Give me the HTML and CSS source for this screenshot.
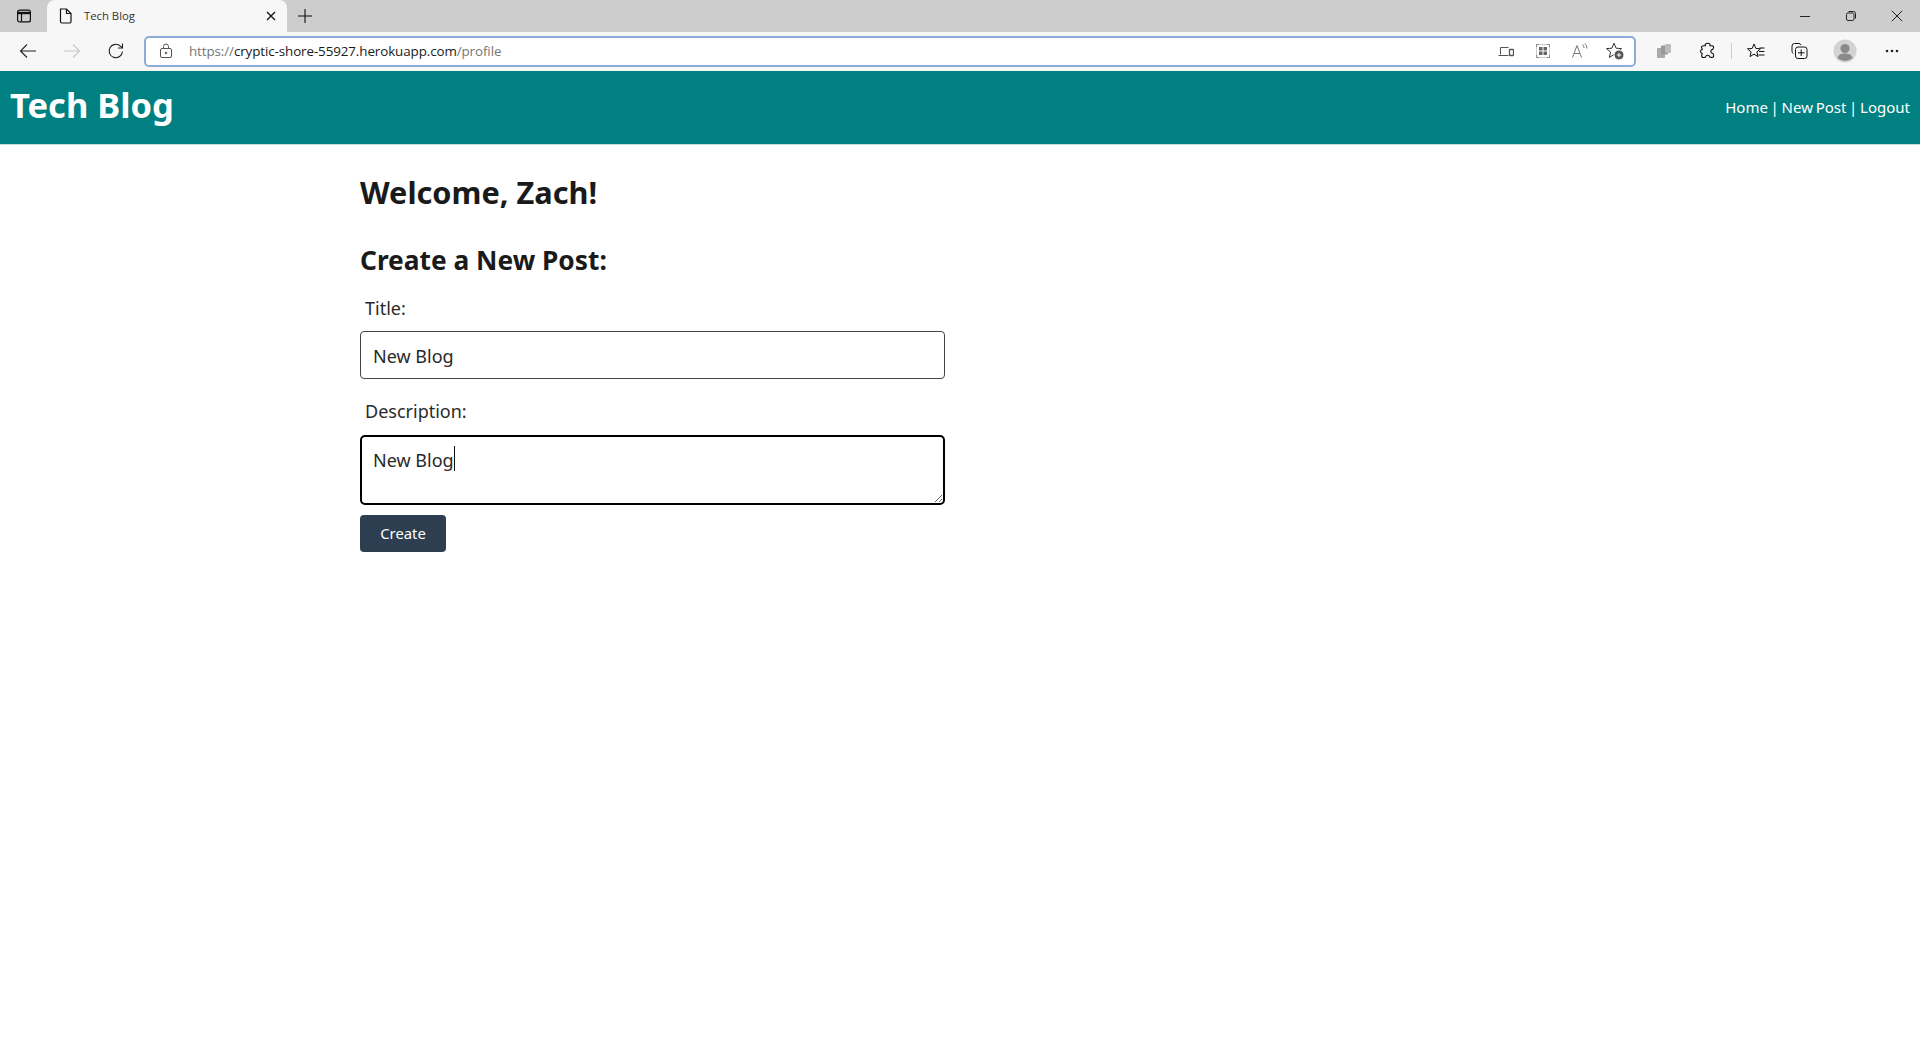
FILE: index.html
```html
<!DOCTYPE html>
<html lang="en">
<head>
    <meta charset="UTF-8">
    <title>Tech Blog</title>
    <link rel="stylesheet" href="styles.css">
</head>
<body>
    <div class="browser">
        <div class="tabstrip">
            <div class="tab-side">
                <svg width="16" height="16" viewBox="0 0 16 16" fill="none" stroke="#111" stroke-width="1.2"><rect x="1.6" y="2.1" width="12.8" height="11.8" rx="2"/><path d="M1.6 5h12.8" stroke-width="2.4"/><path d="M5.5 5v8.5"/></svg>
            </div>
            <div class="tab">
                <svg width="16" height="16" viewBox="0 0 16 16" fill="none" stroke="#111" stroke-width="1.2"><path d="M2.5 1h6l4.500 4.500v8a1.500 1.500 0 0 1-1.500 1.500h-7.500a1.500 1.500 0 0 1-1.500-1.500z"/><path d="M8.500 1v4.500h4.500"/></svg>
                <span class="tab-title">Tech Blog</span>
                <svg class="tab-close" width="10" height="10" viewBox="0 0 10 10" stroke="#111" stroke-width="1.3"><path d="M1 1l8 8M9 1l-8 8"/></svg>
            </div>
            <svg class="new-tab" width="16" height="16" viewBox="0 0 16 16" stroke="#111" stroke-width="1.1"><path d="M8 1v14M1 8h14"/></svg>
            <div class="window-btns">
                <svg width="12" height="12" viewBox="0 0 12 12" stroke="#222"><path d="M1 6.500h10"/></svg>
                <svg width="12" height="12" viewBox="0 0 12 12" fill="none" stroke="#222"><rect x="1.500" y="3" width="7.500" height="7.500" rx="1.500"/><path d="M3.500 1.500h5a2 2 0 0 1 2 2v5"/></svg>
                <svg width="12" height="12" viewBox="0 0 12 12" stroke="#222"><path d="M.8.800l10.400 10.400M11.200.800l-10.400 10.400"/></svg>
            </div>
        </div>
        <div class="toolbar">
            <div class="nav-btns">
                <svg width="18" height="16" viewBox="0 0 18 16" fill="none" stroke="#222" stroke-width="1.100"><path d="M17 8H1.500M8 1.500L1.500 8 8 14.500"/></svg>
                <svg width="18" height="16" viewBox="0 0 18 16" fill="none" stroke="#c8c8c8" stroke-width="1.100"><path d="M1 8h15.500M10 1.500L16.500 8 10 14.500"/></svg>
                <svg width="18" height="18" viewBox="0 0 18 18" fill="none" stroke="#222" stroke-width="1.100"><path d="M15.500 9.500a6.700 6.700 0 1 1-2-5.300L15.500 6"/><path d="M15.500 1.500V6H11"/></svg>
            </div>
            <div class="address">
                <svg width="14" height="16" viewBox="0 0 14 16" fill="none" stroke="#555"><rect x="1.500" y="5.500" width="11" height="9" rx="1.500"/><path d="M4.500 5.500V3.500a2.500 2.500 0 0 1 5 0V5.500"/><circle cx="7" cy="10" r=".8" fill="#555"/></svg>
                <span class="url"><span class="url-dim">https://</span>cryptic-shore-55927.herokuapp.com<span class="url-dim">/profile</span></span>
                <div class="address-icons">
                    <svg width="16" height="16" viewBox="0 0 16 16" fill="none" stroke="#555"><path d="M2.500 11.500V4.500h8M.5 12.500h10"/><rect x="11.500" y="6.500" width="4" height="6" rx=".6" stroke-width="1.300"/></svg>
                    <svg width="16" height="16" viewBox="0 0 16 16" fill="none" stroke="#888"><rect x="1.500" y="1.500" width="13" height="13" stroke="#ccc"/><path d="M1.500 4V1.500H4M12 1.500h2.500V4M14.500 12v2.500H12M4 14.500H1.500V12"/><g fill="#666" stroke="none"><rect x="4" y="4" width="3.500" height="3.500"/><rect x="8.500" y="4" width="3.500" height="3.500"/><rect x="4" y="8.500" width="3.500" height="3.500"/><rect x="8.500" y="8.500" width="3.500" height="3.500"/></g></svg>
                    <svg width="16" height="16" viewBox="0 0 16 16" fill="none" stroke="#777"><path d="M.5 14.500L5 2.500l4.500 12M2 10.500h6M10.500 1.500a4 4 0 0 1 1.500 3.500M12.800.5a6 6 0 0 1 2.200 5"/></svg>
                    <svg class="fav-add" width="18" height="18" viewBox="0 0 18 18" fill="none" stroke="#333"><path d="M8 1.200l2.100 5 5.400.4-4.100 3.500 1.300 5.300L8 12.600l-4.700 2.800 1.300-5.300L.5 6.600l5.400-.4z"/><circle cx="13" cy="13" r="5" fill="#555" stroke="#fff"/><path d="M13 10.800v4.400M10.800 13h4.400" stroke="#fff"/></svg>
                </div>
            </div>
            <div class="toolbar-icons">
                <svg class="tb-collect" width="16" height="16" viewBox="0 0 16 16" fill="#aaa"><rect x="1" y="5" width="8" height="10" rx="1"/><rect x="5" y="2.500" width="7" height="9" rx="1" fill="#999"/><rect x="9" y="1" width="6" height="9" rx="1" fill="#bbb"/></svg>
                <svg class="tb-ext" width="18" height="18" viewBox="0 0 18 18" fill="none" stroke="#111" stroke-width="1.100"><path d="M6.300 3.800C5.800 2.400 7 1.200 8.600 1.200S11.500 2.400 11 3.800c1.300 0 3.200-.4 3.600.8.400 1.200-.8 2-.8 2.800-1.300.2-2 1-2 2.100s.9 1.800 2.100 2c.4 1 1.500 2 .5 3.300-.9 1.200-2.600.4-3.600.3-.2-1.200-1-1.800-2.100-1.800s-1.900.6-2.100 1.800c-1.200.2-2.800.9-3.700-.3-.9-1.200.3-2.300.4-3.300-1.300-.5-1.800-1.100-1.800-2.100s.7-1.700 1.800-2c-.1-1-1.300-1.700-.7-2.800.6-1.100 2.400-.7 3.700-.8z"/></svg>
                <span class="tb-sep"></span>
                <svg class="tb-fav" width="18" height="18" viewBox="0 0 18 18" fill="none" stroke="#111"><path d="M7 2l1.800 4.400 4.700.4-3.600 3.100 1.100 4.700L7 12.100l-4 2.500 1.100-4.700L.5 6.800l4.700-.4z"/><path d="M12.500 6h5M12 9.500h5.500M11.500 13h6"/></svg>
                <svg class="tb-coll" width="18" height="18" viewBox="0 0 18 18" fill="none" stroke="#111"><path d="M3.500 11.500A2.500 2.500 0 0 1 2 9.200V4a2.500 2.500 0 0 1 2.500-2.500H9A2.500 2.500 0 0 1 11 3"/><rect x="5.500" y="5" width="11.500" height="11.500" rx="2.500"/><path d="M11.200 7.500v6.500M8 10.800h6.500"/></svg>
                <svg class="tb-avatar" width="24" height="24" viewBox="0 0 24 24"><circle cx="12" cy="12" r="11.500" fill="#d3d3d3"/><circle cx="12" cy="9.500" r="4.600" fill="#8a8a8a"/><path d="M4.500 19c1-3.800 4-4.500 7.500-4.500s6.500.7 7.500 4.500a11 11 0 0 1-15 0z" fill="#8a8a8a"/></svg>
                <svg class="tb-more" width="14" height="4" viewBox="0 0 14 4" fill="#222"><circle cx="2" cy="2" r="1.300"/><circle cx="7" cy="2" r="1.300"/><circle cx="12" cy="2" r="1.300"/></svg>
            </div>
        </div>
    </div>

    <header class="site-header">
        <h1><a href="#">Tech Blog</a></h1>
        <nav>
            <a href="#">Home</a> | <a href="#">New Post</a> | <a href="#">Logout</a>
        </nav>
    </header>

    <main class="content">
        <h2 class="welcome">Welcome, Zach!</h2>
        <form class="post-form">
            <h3>Create a New Post:</h3>
            <label for="title">Title:</label>
            <input type="text" id="title" value="New Blog">
            <label for="description">Description:</label>
            <div class="textarea-wrap">
                <textarea id="description">New Blog</textarea>
                <span class="caret"></span>
            </div>
            <button type="button">Create</button>
        </form>
    </main>
</body>
</html>
```

FILE: styles.css
```css
* {
    box-sizing: border-box;
}

body {
    margin: 0;
    background-color: #fff;
    color: #1a1a1a;
    font-family: "Noto Sans", sans-serif;
}

/* browser chrome */
.browser {
    height: 71px;
    font-family: "Open Sans", sans-serif;
}

.tabstrip {
    display: flex;
    align-items: center;
    height: 32px;
    background-color: #cdcdcd;
}

.tab-side {
    display: flex;
    justify-content: center;
    width: 47px;
}

.tab {
    display: flex;
    align-items: center;
    align-self: flex-end;
    width: 240px;
    height: 32px;
    padding: 0 11px;
    background-color: #f7f7f7;
    border-radius: 8px 8px 0 0;
}

.tab-title {
    flex: 1;
    margin-left: 10px;
    padding-bottom: 2px;
    font-size: 11.3px;
    color: #333;
}

.new-tab {
    margin-left: 10px;
}

.window-btns {
    display: flex;
    gap: 34px;
    margin-left: auto;
    padding-right: 17px;
}

.toolbar {
    display: flex;
    align-items: center;
    height: 39px;
    padding-bottom: 1px;
    background-color: #f7f7f7;
}

.nav-btns {
    display: flex;
    align-items: center;
    gap: 26px;
    width: 144px;
    padding-left: 19px;
}

.address {
    display: flex;
    align-items: center;
    width: 1492px;
    height: 31px;
    padding: 0 10px 0 13px;
    background-color: #fff;
    border: 2px solid #8fabd8;
    border-radius: 5px;
}

.url {
    margin-left: 16px;
    font-size: 13.4px;
    letter-spacing: -0.1px;
    color: #1a1a1a;
}

.url-dim {
    color: #767676;
}

.address-icons {
    display: flex;
    align-items: center;
    gap: 21px;
    margin-left: auto;
}

.fav-add {
    margin-left: -3px;
}

.toolbar-icons {
    display: flex;
    align-items: center;
    padding-left: 20px;
}

.tb-ext {
    margin-left: 27px;
}

.tb-sep {
    width: 1px;
    height: 16px;
    margin-left: 14px;
    background-color: #ccc;
}

.tb-fav {
    margin-left: 15px;
}

.tb-coll {
    margin-left: 25px;
}

.tb-avatar {
    margin-left: 25px;
}

.tb-more {
    margin-left: 28px;
}

/* site */
.site-header {
    display: flex;
    justify-content: space-between;
    align-items: center;
    height: 74px;
    padding: 0 10px;
    background-color: #008080;
    border-bottom: 1px solid #c8e0e0;
    color: #fff;
}

.site-header h1 {
    margin: 0 0 6px;
    font-size: 34.5px;
    font-weight: 700;
}

.site-header a {
    color: #fff;
    text-decoration: none;
}

.site-header nav {
    margin-bottom: 2px;
    font-size: 15px;
    word-spacing: -1.2px;
}

.content {
    width: 585px;
    margin-left: 360px;
}

.welcome {
    margin: 0;
    padding-top: 25px;
    font-size: 30.7px;
    font-weight: 700;
    line-height: 44px;
}

.post-form h3 {
    margin: 0;
    padding-top: 28px;
    font-size: 26.3px;
    font-weight: 700;
    line-height: 36px;
}

.post-form label {
    display: block;
    margin-top: 17px;
    padding-left: 5px;
    font-size: 18px;
    line-height: 27px;
    color: #2a2a2a;
}

.post-form input,
.post-form textarea {
    display: block;
    width: 100%;
    font-family: "Noto Sans", sans-serif;
    font-size: 18px;
    line-height: 27px;
    color: #2a2a2a;
    background-color: #fff;
    border: 1px solid #444;
    border-radius: 4px;
}

.post-form input {
    height: 48px;
    margin-top: 9px;
    margin-bottom: 18.5px;
    padding: 9px 12px 7px;
}

.textarea-wrap {
    position: relative;
    margin-top: 10px;
}

.post-form textarea {
    height: 70px;
    border: 2px solid #000;
    border-radius: 5px;
    padding: 10px 11px 4px;
    outline: none;
}

.caret {
    position: absolute;
    top: 11px;
    left: 94px;
    width: 1px;
    height: 25px;
    background-color: #111;
}

.post-form button {
    display: block;
    width: 86px;
    height: 37px;
    margin-top: 10px;
    padding: 0;
    font-family: "Noto Sans", sans-serif;
    font-size: 14.8px;
    color: #fff;
    background-color: #2c3e50;
    border: none;
    border-radius: 4px;
}
```
